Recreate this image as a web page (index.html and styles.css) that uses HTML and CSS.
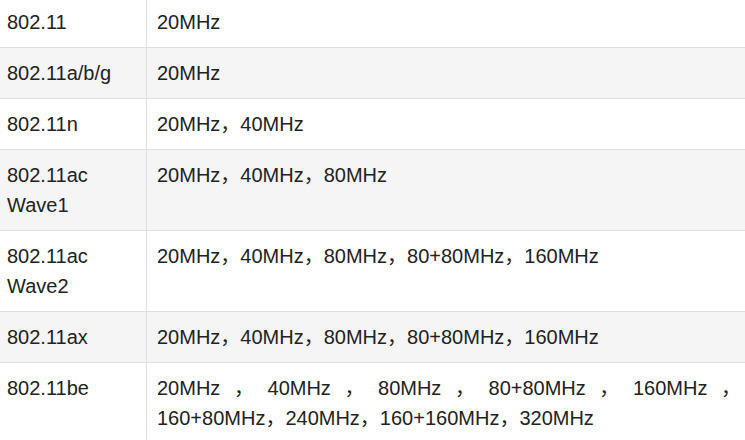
FILE: index.html
```html
<!DOCTYPE html>
<html lang="zh-CN">
<head>
<meta charset="utf-8">
<title>802.11 信道带宽</title>
<link rel="stylesheet" href="styles.css">
</head>
<body>
<table class="spec">
  <colgroup><col class="col-std"><col class="col-bw"></colgroup>
  <tbody>
    <tr><td>802.11</td><td>20MHz</td></tr>
    <tr><td>802.11a/b/g</td><td>20MHz</td></tr>
    <tr><td>802.11n</td><td>20MHz，40MHz</td></tr>
    <tr><td>802.11ac Wave1</td><td>20MHz，40MHz，80MHz</td></tr>
    <tr><td>802.11ac Wave2</td><td>20MHz，40MHz，80MHz，80+80MHz，160MHz</td></tr>
    <tr><td>802.11ax</td><td>20MHz，40MHz，80MHz，80+80MHz，160MHz</td></tr>
    <tr><td>802.11be</td><td>20MHz，40MHz，80MHz，80+80MHz，160MHz，160+80MHz，240MHz，160+160MHz，320MHz</td></tr>
  </tbody>
</table>
</body>
</html>
```

FILE: styles.css
```css
html, body {
  margin: 0;
  padding: 0;
  background: #fff;
  overflow: hidden;
}

.spec {
  margin: -4px 0 0 -4px;
  border-collapse: collapse;
  table-layout: fixed;
  width: 756px;
  font-family: "Liberation Sans", Arial, "Noto Sans CJK SC", sans-serif;
  font-size: 20px;
  line-height: 30px;
  color: #222;
}

.col-std { width: 150px; }

.spec td {
  border: 1px solid #dedede;
  padding: 10px;
  vertical-align: top;
  text-align: justify;
}

.spec tr:nth-child(even) td {
  background: #f5f5f5;
}
```
